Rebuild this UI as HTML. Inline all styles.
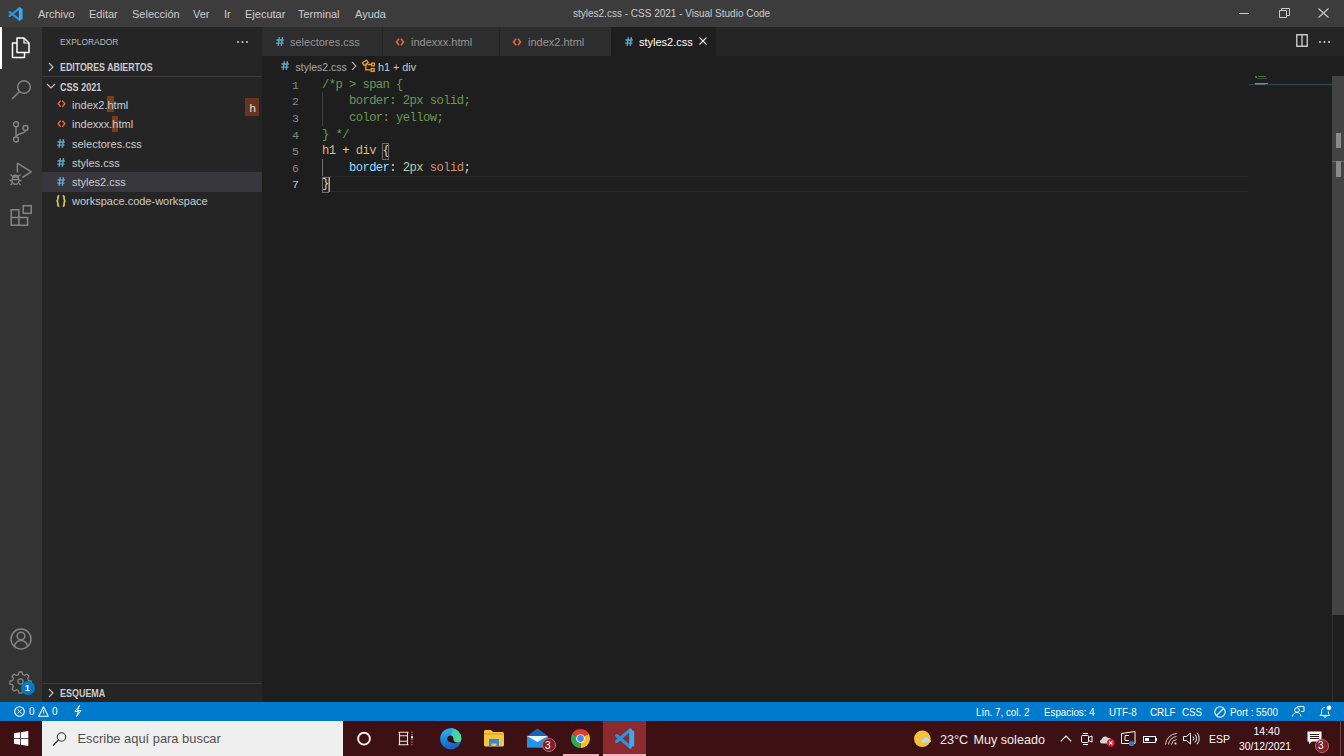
<!DOCTYPE html>
<html><head><meta charset="utf-8">
<style>
*{margin:0;padding:0;box-sizing:border-box}
html,body{width:1344px;height:756px;overflow:hidden;background:#1e1e1e;font-family:"Liberation Sans",sans-serif;position:relative}
.a{position:absolute;white-space:nowrap;line-height:1}
svg{position:absolute;overflow:visible}
#title{left:0;top:0;width:1344px;height:27px;background:#3c3c3c}
#act{left:0;top:27px;width:42px;height:675px;background:#333333}
#side{left:42px;top:27px;width:220px;height:675px;background:#252526}
#tabs{left:262px;top:27px;width:1082px;height:29px;background:#252526}
.tab{top:0;height:29px;background:#2d2d2d}
#status{left:0;top:702px;width:1344px;height:19px;background:#007acc}
#task{left:0;top:721px;width:1344px;height:35px;background:#3d1114}
.menu{top:9px;font-size:11px;color:#cccccc}
.ft{font-size:11px;color:#cccccc;left:72px}
.tabt{top:37px;font-size:11px;color:#969696}
.code{white-space:pre;font-family:"Liberation Mono",monospace;font-size:12.2px;letter-spacing:-0.58px;line-height:16.625px;height:16.625px;left:322px}
.ln{font-family:"Liberation Mono",monospace;font-size:12px;line-height:16.625px;color:#858585;left:292px;padding-top:1px;font-size:11.6px}
.sb{top:706.7px;font-size:10.8px;color:#ffffff;transform:scaleX(0.907);transform-origin:0 0}
.c{color:#6a9955}.t{color:#d7ba7d}.p{color:#9cdcfe}.n{color:#b5cea8}.s{color:#ce9178}.d{color:#d4d4d4}
</style></head><body>
<div class="a" id="title"></div>
<div class="a" id="act"></div>
<div class="a" id="side"></div>
<div class="a" id="tabs">
  <div class="a tab" style="left:0;width:120px"></div>
  <div class="a tab" style="left:121px;width:116px"></div>
  <div class="a tab" style="left:238px;width:111px"></div>
  <div class="a tab" style="left:349px;width:105px;background:#1e1e1e"></div>
</div>
<div class="a" id="status"></div>
<div class="a" id="task"></div>
<div class="a" style="left:0;top:721px;width:1344px;height:1px;background:#1c0a10"></div>

<!-- ===== title bar ===== -->
<svg style="left:7.5px;top:6.5px" width="15.5" height="14" viewBox="0 0 100 100" preserveAspectRatio="none">
  <path d="M76 8L10 64M76 92L10 36" stroke="#2c93dc" stroke-width="15" stroke-linecap="round"/><path d="M70 4L94 15V85L70 96Z" fill="#3aa9f0"/>
</svg>
<div class="a menu" style="left:38px">Archivo</div>
<div class="a menu" style="left:89px">Editar</div>
<div class="a menu" style="left:132px">Selección</div>
<div class="a menu" style="left:193px">Ver</div>
<div class="a menu" style="left:224px">Ir</div>
<div class="a menu" style="left:245px">Ejecutar</div>
<div class="a menu" style="left:298px">Terminal</div>
<div class="a menu" style="left:355px">Ayuda</div>
<div class="a menu" style="left:573px;font-size:10px;top:9px">styles2.css - CSS 2021 - Visual Studio Code</div>
<!-- window controls -->
<div class="a" style="left:1239px;top:13px;width:10px;height:1px;background:#cccccc"></div>
<svg style="left:1279px;top:8px" width="11" height="10" viewBox="0 0 11 10"><path d="M0.5 2.5h7v7h-7z M2.5 2.5V0.5h8v7h-3" fill="none" stroke="#cccccc" stroke-width="1"/></svg>
<svg style="left:1318px;top:8px" width="11" height="10" viewBox="0 0 11 10"><path d="M0.5 0.5L10.5 9.5M10.5 0.5L0.5 9.5" stroke="#cccccc" stroke-width="1.1"/></svg>

<!-- ===== activity bar ===== -->
<div class="a" style="left:0;top:27px;width:2px;height:42px;background:#ffffff"></div>
<svg style="left:11px;top:37px" width="20" height="22" viewBox="0 0 20 22">
  <path d="M6 1h7l5 5v9.5h-12z" fill="none" stroke="#ffffff" stroke-width="1.5" stroke-linejoin="round"/>
  <path d="M13 1v5h5" fill="none" stroke="#ffffff" stroke-width="1.2"/>
  <path d="M6 6h-4.5v14.5h12v-5" fill="none" stroke="#ffffff" stroke-width="1.5" stroke-linejoin="round"/>
</svg>
<svg style="left:11px;top:79px" width="21" height="21" viewBox="0 0 21 21">
  <circle cx="13" cy="8" r="6.3" fill="none" stroke="#858585" stroke-width="1.5"/>
  <path d="M8.5 12.5L1.5 19.5" stroke="#858585" stroke-width="1.6" stroke-linecap="round"/>
</svg>
<svg style="left:12px;top:121px" width="17" height="22" viewBox="0 0 17 22">
  <circle cx="4" cy="3.3" r="2.5" fill="none" stroke="#858585" stroke-width="1.4"/>
  <circle cx="4" cy="18.5" r="2.5" fill="none" stroke="#858585" stroke-width="1.4"/>
  <circle cx="13.5" cy="7" r="2.5" fill="none" stroke="#858585" stroke-width="1.4"/>
  <path d="M4 5.8V16M13.5 9.5C13.5 13 4.5 12 4 16" fill="none" stroke="#858585" stroke-width="1.4"/>
</svg>
<svg style="left:0px;top:155px" width="42" height="35" viewBox="0 0 42 35">
  <path d="M17.4 8.2L31.2 16.8L22.4 22.5" fill="none" stroke="#858585" stroke-width="1.5" stroke-linejoin="round"/>
  <path d="M17.4 8.2V17.5" stroke="#858585" stroke-width="1.5"/>
  <path d="M12.5 22.5C12.5 19.5 18.5 19.5 18.5 22.5" fill="none" stroke="#858585" stroke-width="1.4"/>
  <ellipse cx="15.5" cy="25.5" rx="3.6" ry="3.8" fill="none" stroke="#858585" stroke-width="1.4"/>
  <path d="M12 21L10.5 19.5M19 21L20.5 19.5M11.5 25.5H9.5M19.5 25.5H21.5M12 28.5L10.5 30M19 28.5L20.5 30M12 24.5H19" fill="none" stroke="#858585" stroke-width="1.3"/>
</svg>
<svg style="left:0px;top:200px" width="42" height="30" viewBox="0 0 42 30">
  <path d="M11.2 9.7H18.9V17.6H27.6V25.3H11.2Z M18.9 17.6V25.3 M11.2 17.6H18.9" fill="none" stroke="#858585" stroke-width="1.5"/>
  <rect x="23.2" y="5.7" width="8" height="7.6" fill="none" stroke="#858585" stroke-width="1.5"/>
</svg>
<svg style="left:10px;top:628px" width="22" height="22" viewBox="0 0 22 22">
  <circle cx="11" cy="11" r="10" fill="none" stroke="#858585" stroke-width="1.5"/>
  <circle cx="11" cy="8" r="3.8" fill="none" stroke="#858585" stroke-width="1.5"/>
  <path d="M4.5 18C5.5 14 8 12.5 11 12.5S16.5 14 17.5 18" fill="none" stroke="#858585" stroke-width="1.5"/>
</svg>
<svg style="left:10px;top:671px" width="21" height="21" viewBox="0 0 21 21">
  <path d="M9 1h3l0.6 2.6 2 0.9 2.3-1.4 2.1 2.1-1.4 2.3 0.9 2 2.6 0.6v3l-2.6 0.6-0.9 2 1.4 2.3-2.1 2.1-2.3-1.4-2 0.9-0.6 2.6h-3l-0.6-2.6-2-0.9-2.3 1.4-2.1-2.1 1.4-2.3-0.9-2-2.6-0.6v-3l2.6-0.6 0.9-2-1.4-2.3 2.1-2.1 2.3 1.4 2-0.9z" fill="none" stroke="#858585" stroke-width="1.3" stroke-linejoin="round"/>
  <circle cx="10.5" cy="10.5" r="2.6" fill="none" stroke="#858585" stroke-width="1.3"/>
</svg>
<div class="a" style="left:20.5px;top:681px;width:14px;height:14px;border-radius:50%;background:#007acc"></div>
<div class="a" style="left:25px;top:684px;font-size:8.5px;font-weight:bold;color:#fff">1</div>

<!-- ===== sidebar ===== -->
<div class="a" style="left:59.7px;top:37px;font-size:9.9px;color:#bbbbbb;transform:scaleX(0.85);transform-origin:0 0">EXPLORADOR</div>
<div class="a" style="left:237px;top:40.5px;width:2px;height:2px;border-radius:1px;background:#ccc;box-shadow:4.5px 0 0 #ccc,9px 0 0 #ccc"></div>
<svg style="left:48px;top:62px" width="6" height="10" viewBox="0 0 6 10"><path d="M1 1L5 5L1 9" fill="none" stroke="#c5c5c5" stroke-width="1.1"/></svg>
<div class="a" style="left:59.5px;top:63.3px;font-size:10.3px;font-weight:bold;color:#cccccc;transform:scaleX(0.858);transform-origin:0 0">EDITORES ABIERTOS</div>
<div class="a" style="left:42px;top:76px;width:220px;height:1px;background:#3c3c3c"></div>
<svg style="left:46px;top:83px" width="10" height="6" viewBox="0 0 10 6"><path d="M1 1L5 5L9 1" fill="none" stroke="#c5c5c5" stroke-width="1.1"/></svg>
<div class="a" style="left:59.5px;top:82.8px;font-size:10.3px;font-weight:bold;color:#cccccc;transform:scaleX(0.88);transform-origin:0 0">CSS 2021</div>

<!-- selected row -->
<div class="a" style="left:42px;top:172px;width:220px;height:20px;background:#37373d"></div>
<!-- find highlights -->
<div class="a" style="left:107px;top:96px;width:7px;height:16px;background:#7a3d1a"></div>
<div class="a" style="left:112px;top:116px;width:6px;height:16px;background:#7a3d1a"></div>
<div class="a" style="left:245px;top:98.3px;width:14px;height:17.5px;background:#6b321f"></div>
<div class="a" style="left:249.5px;top:103px;font-size:11.5px;color:#ece4e0">h</div>

<svg style="left:56.5px;top:100.2px" width="9" height="7.5" viewBox="0 0 9 8"><path d="M3.6 0.7L1 4L3.6 7.3M5.4 0.7L8 4L5.4 7.3" fill="none" stroke="#e0683e" stroke-width="1.6"/></svg>
<div class="a ft" style="top:100px">index2.html</div>
<svg style="left:56.5px;top:119.5px" width="9" height="7.5" viewBox="0 0 9 8"><path d="M3.6 0.7L1 4L3.6 7.3M5.4 0.7L8 4L5.4 7.3" fill="none" stroke="#e0683e" stroke-width="1.6"/></svg>
<div class="a ft" style="top:119px">indexxx.html</div>
<svg style="left:56.8px;top:138.6px" width="8" height="9" viewBox="0 0 8 9"><path d="M3.3 0.2L2.1 8.8M6.5 0.2L5.3 8.8M0.4 3H7.8M0.1 6.1H7.5" fill="none" stroke="#5fa6c8" stroke-width="1.4"/></svg>
<div class="a ft" style="top:139px">selectores.css</div>
<svg style="left:56.8px;top:157.8px" width="8" height="9" viewBox="0 0 8 9"><path d="M3.3 0.2L2.1 8.8M6.5 0.2L5.3 8.8M0.4 3H7.8M0.1 6.1H7.5" fill="none" stroke="#5fa6c8" stroke-width="1.4"/></svg>
<div class="a ft" style="top:158px">styles.css</div>
<svg style="left:56.8px;top:177.1px" width="8" height="9" viewBox="0 0 8 9"><path d="M3.3 0.2L2.1 8.8M6.5 0.2L5.3 8.8M0.4 3H7.8M0.1 6.1H7.5" fill="none" stroke="#5fa6c8" stroke-width="1.4"/></svg>
<div class="a ft" style="top:177px">styles2.css</div>
<svg style="left:56px;top:195px" width="10" height="12" viewBox="0 0 10 12"><path d="M3.3 0.8C1.8 0.8 1.9 1.8 1.9 3.5C1.9 5 1.6 5.8 0.6 6C1.6 6.2 1.9 7 1.9 8.5C1.9 10.2 1.8 11.2 3.3 11.2M6.7 0.8C8.2 0.8 8.1 1.8 8.1 3.5C8.1 5 8.4 5.8 9.4 6C8.4 6.2 8.1 7 8.1 8.5C8.1 10.2 8.2 11.2 6.7 11.2" fill="none" stroke="#d2cc5a" stroke-width="1.7"/></svg>
<div class="a ft" style="top:196px">workspace.code-workspace</div>

<div class="a" style="left:42px;top:683px;width:220px;height:1px;background:#3c3c3c"></div>
<svg style="left:48px;top:688px" width="6" height="10" viewBox="0 0 6 10"><path d="M1 1L5 5L1 9" fill="none" stroke="#c5c5c5" stroke-width="1.1"/></svg>
<div class="a" style="left:59.8px;top:688.7px;font-size:10.3px;font-weight:bold;color:#cccccc;transform:scaleX(0.87);transform-origin:0 0">ESQUEMA</div>

<!-- ===== tabs ===== -->
<svg style="left:275.8px;top:36.5px" width="8" height="9" viewBox="0 0 8 9"><path d="M3.3 0.2L2.1 8.8M6.5 0.2L5.3 8.8M0.4 3H7.8M0.1 6.1H7.5" fill="none" stroke="#5fa6c8" stroke-width="1.4"/></svg>
<div class="a tabt" style="left:290px">selectores.css</div>
<svg style="left:395px;top:38px" width="10" height="8" viewBox="0 0 9 8"><path d="M3.6 0.7L1 4L3.6 7.3M5.4 0.7L8 4L5.4 7.3" fill="none" stroke="#e0683e" stroke-width="1.6"/></svg>
<div class="a tabt" style="left:411px">indexxx.html</div>
<svg style="left:512px;top:38px" width="10" height="8" viewBox="0 0 9 8"><path d="M3.6 0.7L1 4L3.6 7.3M5.4 0.7L8 4L5.4 7.3" fill="none" stroke="#e0683e" stroke-width="1.6"/></svg>
<div class="a tabt" style="left:528px">index2.html</div>
<svg style="left:624.5px;top:36.5px" width="8" height="9" viewBox="0 0 8 9"><path d="M3.3 0.2L2.1 8.8M6.5 0.2L5.3 8.8M0.4 3H7.8M0.1 6.1H7.5" fill="none" stroke="#5fa6c8" stroke-width="1.4"/></svg>
<div class="a tabt" style="left:639px;color:#ffffff">styles2.css</div>
<svg style="left:699px;top:37.3px" width="8" height="8" viewBox="0 0 8 8"><path d="M0.5 0.5L7.5 7.5M7.5 0.5L0.5 7.5" stroke="#e8e8e8" stroke-width="1.1"/></svg>
<!-- split / more -->
<svg style="left:1296px;top:34px" width="12" height="13" viewBox="0 0 12 13"><path d="M0.75 0.75h10.5v11.5h-10.5z M6 0.75v11.5" fill="none" stroke="#c5c5c5" stroke-width="1.4"/></svg>
<div class="a" style="left:1318.5px;top:40.5px;width:2px;height:2px;border-radius:1px;background:#ccc;box-shadow:4.5px 0 0 #ccc,9px 0 0 #ccc"></div>

<!-- ===== breadcrumbs ===== -->
<svg style="left:280.8px;top:61px" width="8" height="9" viewBox="0 0 8 9"><path d="M3.3 0.2L2.1 8.8M6.5 0.2L5.3 8.8M0.4 3H7.8M0.1 6.1H7.5" fill="none" stroke="#5fa6c8" stroke-width="1.4"/></svg>
<div class="a" style="left:295.5px;top:62px;font-size:10.5px;color:#a9a9a9">styles2.css</div>
<svg style="left:351px;top:61px" width="6" height="10" viewBox="0 0 6 10"><path d="M1 1L5 5L1 9" fill="none" stroke="#a9a9a9" stroke-width="1.1"/></svg>
<svg style="left:361px;top:59px" width="15" height="14" viewBox="0 0 15 14">
  <rect x="1.8" y="2.2" width="5" height="3" transform="rotate(-35 4.3 3.7)" fill="none" stroke="#ee9d28" stroke-width="1.3"/>
  <path d="M6 5.5L4.8 6.3V10.8H9.8M6.5 5.5H10.5" fill="none" stroke="#ee9d28" stroke-width="1.3"/>
  <rect x="10.6" y="4.2" width="2.8" height="2.6" fill="none" stroke="#ee9d28" stroke-width="1.3"/>
  <rect x="10.2" y="9.6" width="3" height="2.8" fill="none" stroke="#ee9d28" stroke-width="1.3"/>
</svg>
<div class="a" style="left:378px;top:62px;font-size:10.8px;color:#cccccc">h1 + div</div>

<!-- ===== editor ===== -->
<div class="a" style="left:322px;top:176px;width:926px;height:16px;border-top:1px solid #2a2a2a;border-bottom:1px solid #2a2a2a"></div>
<div class="a" style="left:322px;top:92px;width:1px;height:34px;background:#404040"></div>
<div class="a" style="left:322px;top:159px;width:1px;height:17px;background:#707070"></div>

<div class="a ln" style="top:76.6px">1</div>
<div class="a ln" style="top:93.2px">2</div>
<div class="a ln" style="top:109.8px">3</div>
<div class="a ln" style="top:126.5px">4</div>
<div class="a ln" style="top:143.1px">5</div>
<div class="a ln" style="top:159.7px">6</div>
<div class="a ln" style="top:176.4px;color:#c6c6c6">7</div>

<div class="a code" style="top:76.6px"><span class="c">/*p &gt; span {</span></div>
<div class="a code" style="top:93.2px"><span class="c">    border: 2px solid;</span></div>
<div class="a code" style="top:109.8px"><span class="c">    color: yellow;</span></div>
<div class="a code" style="top:126.5px"><span class="c">} */</span></div>
<div class="a code" style="top:143.1px"><span class="t">h1</span><span class="d"> + </span><span class="t">div</span><span class="d"> {</span></div>
<div class="a code" style="top:159.7px"><span class="d">    </span><span class="p">border</span><span class="d">: </span><span class="n">2px</span><span class="d"> </span><span class="s">solid</span><span class="d">;</span></div>
<div class="a code" style="top:176.4px"><span class="d">}</span></div>
<!-- bracket match boxes -->
<div class="a" style="left:382px;top:143px;width:7px;height:16.5px;border:1px solid #6e6e6e"></div>
<div class="a" style="left:322px;top:176.5px;width:7px;height:16px;border:1px solid #6e6e6e"></div>
<div class="a" style="left:329px;top:177px;width:1px;height:15px;background:#aeafad"></div>

<!-- minimap -->
<div class="a" style="left:1249px;top:83px;width:83px;height:3px;background:#1d2731"></div>
<div class="a" style="left:1249px;top:84px;width:83px;height:1px;background:#2c4258"></div>
<div class="a" style="left:1255px;top:76px;width:2px;height:2px;background:#4a6a3a"></div>
<div class="a" style="left:1258px;top:76px;width:8px;height:1px;background:#4a6a3a"></div>
<div class="a" style="left:1257px;top:78px;width:10px;height:1px;background:#3a5230"></div>
<div class="a" style="left:1255px;top:83px;width:13px;height:1px;background:#7c8894"></div>
<div class="a" style="left:1255px;top:84px;width:10px;height:1px;background:#5a6570"></div>
<!-- scrollbar -->
<div class="a" style="left:1332px;top:76px;width:1px;height:626px;background:#303030"></div>
<div class="a" style="left:1332px;top:76px;width:12px;height:539px;background:#434343"></div>
<div class="a" style="left:1336px;top:133px;width:5px;height:15px;background:#8a8a8a"></div>
<div class="a" style="left:1332px;top:161px;width:12px;height:1px;background:#6a6a6a"></div>
<div class="a" style="left:1336px;top:161px;width:5px;height:16px;background:#8a8a8a"></div>

<!-- ===== status bar ===== -->
<svg style="left:14px;top:705.5px" width="11" height="11" viewBox="0 0 11 11"><circle cx="5.5" cy="5.5" r="4.8" fill="none" stroke="#fff" stroke-width="1.1"/><path d="M3.5 3.5L7.5 7.5M7.5 3.5L3.5 7.5" stroke="#fff" stroke-width="1"/></svg>
<div class="a sb" style="left:28.5px;font-size:11px;top:706px">0</div>
<svg style="left:38px;top:705.5px" width="11" height="11" viewBox="0 0 11 11"><path d="M5.5 0.8L10.3 10.3H0.7Z" fill="none" stroke="#fff" stroke-width="1.1" stroke-linejoin="round"/><path d="M5.5 4V7.5" stroke="#fff" stroke-width="1"/></svg>
<div class="a sb" style="left:52px;font-size:11px;top:706px">0</div>
<svg style="left:74px;top:705px" width="8" height="12" viewBox="0 0 8 12"><path d="M5.5 0.5L1 6.5H4.5L2.5 11.5L7 5.5H3.5Z" fill="none" stroke="#fff" stroke-width="1" stroke-linejoin="round"/></svg>
<div class="a sb" style="left:976px">Lín. 7, col. 2</div>
<div class="a sb" style="left:1044px">Espacios: 4</div>
<div class="a sb" style="left:1108.5px">UTF-8</div>
<div class="a sb" style="left:1150px">CRLF</div>
<div class="a sb" style="left:1181.5px">CSS</div>
<svg style="left:1214px;top:705.5px" width="12" height="12" viewBox="0 0 12 12"><circle cx="6" cy="6" r="5.2" fill="none" stroke="#fff" stroke-width="1.1"/><path d="M2.5 9.5L9.5 2.5" stroke="#fff" stroke-width="1.1"/></svg>
<div class="a sb" style="left:1229.5px">Port : 5500</div>
<svg style="left:1292px;top:705px" width="13" height="12" viewBox="0 0 13 12"><path d="M5 1.5h7v5h-3" fill="none" stroke="#fff" stroke-width="1"/><circle cx="5" cy="5" r="2.3" fill="none" stroke="#fff" stroke-width="1"/><path d="M0.5 11.5C1 8.5 3 7.5 5 7.5S8.5 8.5 9 11.5" fill="none" stroke="#fff" stroke-width="1"/></svg>
<svg style="left:1319px;top:704.5px" width="13" height="13" viewBox="0 0 13 13"><path d="M6 2.5C3.5 2.5 2.5 4.5 2.5 6.5V9L1 10.5H11L9.5 9V6.5" fill="none" stroke="#fff" stroke-width="1"/><path d="M4.5 11.5C5 12.3 7 12.3 7.5 11.5" fill="none" stroke="#fff" stroke-width="1"/><circle cx="10" cy="2.8" r="2.4" fill="#fff"/></svg>

<!-- ===== taskbar ===== -->
<svg style="left:14px;top:731px" width="14.3" height="15" viewBox="0 0 15 15" preserveAspectRatio="none"><path d="M0 2.2L6.3 1.3V7H0Z M7.1 1.2L15 0V7H7.1Z M0 7.8H6.3V13.7L0 12.8Z M7.1 7.8H15V15L7.1 13.8Z" fill="#ffffff"/></svg>
<div class="a" style="left:42px;top:721px;width:301px;height:35px;background:#f0efef"></div>
<svg style="left:52px;top:732px" width="15" height="14" viewBox="0 0 15 14"><circle cx="9.5" cy="5" r="4.2" fill="none" stroke="#333" stroke-width="1.1"/><path d="M6.5 8L1 13.5" stroke="#333" stroke-width="1.3"/></svg>
<div class="a" style="left:77.5px;top:732.5px;font-size:12.9px;color:#505050">Escribe aquí para buscar</div>
<svg style="left:356px;top:731px" width="16" height="16" viewBox="0 0 16 16"><circle cx="8" cy="7.7" r="5.9" fill="none" stroke="#fff4f4" stroke-width="1.9"/></svg>
<svg style="left:397px;top:731px" width="17" height="15" viewBox="0 0 17 15"><path d="M1.5 1.2H11.5M1.5 13.8H11.5M2.5 1.2V13.8M10.5 1.2V13.8M2.5 4.8H10.5M2.5 10.2H10.5" fill="none" stroke="#f0e2e2" stroke-width="1.1"/><path d="M15 0.5V14.5" stroke="#9a7a7c" stroke-width="1.2" stroke-dasharray="1.5 1"/><rect x="14" y="5.2" width="2" height="2.2" fill="#ffffff"/></svg>
<!-- edge -->
<svg style="left:440px;top:728px" width="22" height="22" viewBox="0 0 22 22">
  <defs><linearGradient id="eg" x1="0.2" y1="0" x2="0.5" y2="1"><stop offset="0" stop-color="#32b8e8"/><stop offset="0.5" stop-color="#1a86e0"/><stop offset="1" stop-color="#1c5cb8"/></linearGradient>
  <linearGradient id="eg2" x1="0" y1="0" x2="1" y2="1"><stop offset="0" stop-color="#36c3da"/><stop offset="1" stop-color="#52e07a"/></linearGradient></defs>
  <circle cx="10.8" cy="10.8" r="10.6" fill="url(#eg)"/>
  <path d="M10.8 0.2A10.6 10.6 0 0 1 21.4 10.8C21.4 13.3 19.6 14.4 17 14.4C14.2 14.4 13.2 12.5 13.2 11.2C13.2 8.8 11.5 7.6 9.5 7.6C12 5 14 3 10.8 0.2Z" fill="url(#eg2)"/>
  <path d="M7.2 11C7.2 8.5 9 7.4 10.6 7.4C12.5 7.4 13.6 9 13.4 11C13.2 13.2 15 14.8 18 14.6C15.5 15.5 13 15.3 11.2 14.4C8.8 14 7.2 12.8 7.2 11Z" fill="#2a1018"/>
</svg>
<!-- explorer -->
<svg style="left:484px;top:730px" width="20" height="17" viewBox="0 0 20 17">
  <path d="M0 1.5C0 0.7 0.7 0 1.5 0H7L9 2H18.5C19.3 2 20 2.7 20 3.5V15C20 15.8 19.3 16.5 18.5 16.5H1.5C0.7 16.5 0 15.8 0 15Z" fill="#f3c543"/>
  <path d="M0 4H20" stroke="#e3a621" stroke-width="1.5"/>
  <path d="M5 9h10v7.5h-2.5v-3h-5v3H5z" fill="#2f8ad8"/>
</svg>
<!-- mail -->
<svg style="left:527px;top:728px" width="22" height="21" viewBox="0 0 22 21">
  <path d="M0 8L10.5 0.5L21 8V19.5H0Z" fill="#1565b8"/>
  <path d="M0 8H21V19.5H0Z" fill="#2196e8"/>
  <path d="M0 8L10.5 14L21 8" fill="#e8f4fc"/>
</svg>
<div class="a" style="left:541.5px;top:738px;width:14px;height:14px;border-radius:50%;background:#7e1f2a;border:1px solid #c86070"></div>
<div class="a" style="left:545px;top:740.5px;font-size:10px;color:#fff">3</div>
<!-- chrome -->
<svg style="left:571px;top:729px" width="19" height="19" viewBox="0 0 20 20">
  <path d="M10 10L1.34 5A10 10 0 0 1 18.66 5Z" fill="#e33b2e"/>
  <path d="M10 10L18.66 5A10 10 0 0 1 10 20Z" fill="#fbc116"/>
  <path d="M10 10L10 20A10 10 0 0 1 1.34 5Z" fill="#2da94f"/>
  <circle cx="10" cy="10" r="4.6" fill="#ffffff"/>
  <circle cx="10" cy="10" r="3.6" fill="#4a8af4"/>
</svg>
<div class="a" style="left:563px;top:754px;width:36px;height:2px;background:#f0b4bc"></div>
<!-- vscode tile -->
<div class="a" style="left:603px;top:721px;width:43px;height:35px;background:#8c2a2e"></div>
<div class="a" style="left:603px;top:754px;width:43px;height:2px;background:#f0b4bc"></div>
<svg style="left:614px;top:728px" width="22" height="21" viewBox="0 0 100 100">
  <path d="M76 8L10 64M76 92L10 36" stroke="#2c93dc" stroke-width="15" stroke-linecap="round"/><path d="M70 4L94 15V85L70 96Z" fill="#3aa9f0"/>
</svg>

<!-- tray -->
<svg style="left:914px;top:730px" width="19" height="18" viewBox="0 0 19 18">
  <circle cx="8.3" cy="8.8" r="8.3" fill="#f5c03c"/>
  <path d="M9 12.5C7 12.5 7 9.5 9 9.5C9.5 7 13.5 6.5 14.3 9C17 8.7 17.8 12.5 15.5 12.5Z" fill="#b9d9f0"/>
</svg>
<div class="a" style="left:940px;top:733.5px;font-size:12.6px;color:#f4ecec">23°C</div>
<div class="a" style="left:973.5px;top:733.5px;font-size:12.6px;color:#f4ecec">Muy soleado</div>
<svg style="left:1060px;top:735px" width="12" height="7" viewBox="0 0 12 7"><path d="M0.7 6.3L6 1L11.3 6.3" fill="none" stroke="#fff" stroke-width="1.1"/></svg>
<svg style="left:1081px;top:732px" width="12" height="14" viewBox="0 0 12 14"><rect x="0.5" y="3.5" width="7" height="7" rx="1" fill="none" stroke="#fff" stroke-width="1"/><path d="M7.5 5.5L11 4V10L7.5 8.5M2 1.5h5M2 12.5h5" fill="none" stroke="#fff" stroke-width="1"/></svg>
<svg style="left:1099px;top:732px" width="17" height="15" viewBox="0 0 17 15"><path d="M3 11.5C0.5 11.5 0.3 7.8 2.8 7.5C3 4.2 7.5 3.3 9 6C11.5 5.5 13 7.5 12.3 9.5C13.5 10 13.2 11.5 12 11.5Z" fill="#d8d4d4"/><circle cx="11.8" cy="10.8" r="3.9" fill="#e02030"/><path d="M10.3 9.3L13.3 12.3M13.3 9.3L10.3 12.3" stroke="#fff" stroke-width="1.1"/></svg>
<svg style="left:1121px;top:731px" width="15" height="16" viewBox="0 0 15 16"><path d="M0.5 2.5L14 0.5V12.5H0.5Z" fill="none" stroke="#fff" stroke-width="1"/><path d="M4 4.5h4M4 4.5v5h4" fill="none" stroke="#fff" stroke-width="1"/><circle cx="10.5" cy="12.5" r="2.6" fill="#2d7cd6"/></svg>
<svg style="left:1143px;top:736px" width="14" height="7" viewBox="0 0 14 7"><rect x="0.5" y="0.5" width="12" height="6" fill="none" stroke="#fff" stroke-width="1"/><rect x="2" y="2" width="4" height="3" fill="#fff"/><rect x="13" y="2" width="1" height="3" fill="#fff"/></svg>
<svg style="left:1165px;top:732px" width="12" height="13" viewBox="0 0 12 13"><path d="M0.5 12.5A12 12 0 0 1 11.5 1.5M3.5 12.5A9 9 0 0 1 11.5 4.5M6.5 12.5A6 6 0 0 1 11.5 7.5" fill="none" stroke="#e0d0d0" stroke-width="1"/><circle cx="10.5" cy="11.5" r="1" fill="#fff"/></svg>
<svg style="left:1183px;top:732px" width="16" height="13" viewBox="0 0 16 13"><path d="M0.5 4.5H3.5L7.5 1V12L3.5 8.5H0.5Z" fill="none" stroke="#fff" stroke-width="1"/><path d="M10 4.5A3 3 0 0 1 10 8.5M12 2.5A6 6 0 0 1 12 10.5M14 0.8A8.5 8.5 0 0 1 14 12.2" fill="none" stroke="#fff" stroke-width="1"/></svg>
<div class="a" style="left:1209px;top:733.5px;font-size:10.5px;color:#ffffff">ESP</div>
<div class="a" style="left:1253.5px;top:725.5px;font-size:10.5px;color:#ffffff">14:40</div>
<div class="a" style="left:1239px;top:742px;font-size:10.4px;color:#ffffff">30/12/2021</div>
<svg style="left:1307px;top:731px" width="15" height="14" viewBox="0 0 15 14"><path d="M0.5 0.5H14.5V10.5H5L2 13V10.5H0.5Z" fill="#fff"/><path d="M3 3.5H12M3 5.5H12M3 7.5H12" stroke="#3d1114" stroke-width="1"/></svg>
<div class="a" style="left:1314.5px;top:738.5px;width:14px;height:14px;border-radius:50%;background:#7e1f2a;border:1px solid #c86070"></div>
<div class="a" style="left:1318px;top:741px;font-size:10px;color:#fff">3</div>
<div class="a" style="left:1340px;top:721px;width:1px;height:35px;background:#6a4a4c"></div>
</body></html>
